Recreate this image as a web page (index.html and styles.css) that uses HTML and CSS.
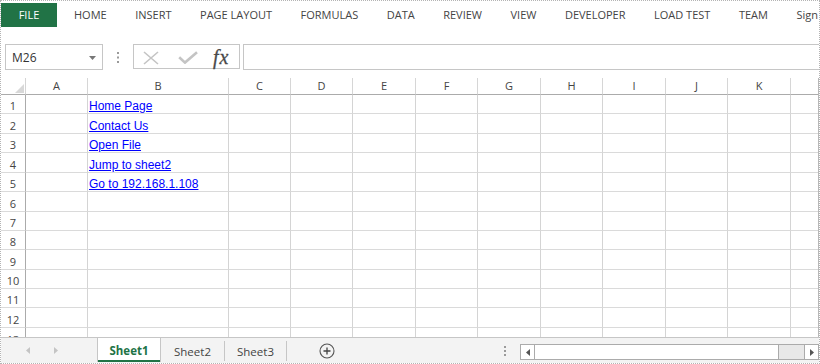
FILE: index.html
```html
<!DOCTYPE html>
<html>
<head>
<meta charset="utf-8">
<link rel="stylesheet" href="styles.css">
</head>
<body>
<div class="app">
  <div class="ribbon">
    <span class="rtab file">FILE</span>
    <span class="rtab">HOME</span>
    <span class="rtab">INSERT</span>
    <span class="rtab">PAGE LAYOUT</span>
    <span class="rtab">FORMULAS</span>
    <span class="rtab">DATA</span>
    <span class="rtab">REVIEW</span>
    <span class="rtab">VIEW</span>
    <span class="rtab">DEVELOPER</span>
    <span class="rtab">LOAD TEST</span>
    <span class="rtab">TEAM</span>
    <span class="rtab">Sign in</span>
  </div>

  <div class="fbar">
    <div class="namebox">
      <span class="nb-text">M26</span>
      <svg class="nb-arrow" width="7" height="4" viewBox="0 0 7 4"><path d="M0 0H7L3.5 4Z" fill="#777"/></svg>
    </div>
    <div class="grip">
      <svg width="2" height="11" viewBox="0 0 2 11"><rect x="0" y="0" width="2" height="2" fill="#9a9a9a"/><rect x="0" y="4.5" width="2" height="2" fill="#9a9a9a"/><rect x="0" y="9" width="2" height="2" fill="#9a9a9a"/></svg>
    </div>
    <div class="fbtns">
      <svg class="ic-x" width="16" height="14" viewBox="0 0 16 14"><path d="M1 1L15 13M15 1L1 13" stroke="#c4c4c4" stroke-width="1.6" fill="none"/></svg>
      <svg class="ic-ok" width="20" height="13" viewBox="0 0 20 13"><path d="M1.2 6.2L7 11.6L19 1.2" stroke="#c4c4c4" stroke-width="2.6" fill="none"/></svg>
      <span class="fx">fx</span>
    </div>
    <div class="finput"></div>
  </div>

  <div class="sheet">
    <div class="corner"><svg width="9" height="9" viewBox="0 0 9 9"><path d="M9 0V9H0Z" fill="#d8d8d8"/></svg></div>
    <div class="ch">A</div><div class="ch">B</div><div class="ch">C</div><div class="ch">D</div><div class="ch">E</div><div class="ch">F</div><div class="ch">G</div><div class="ch">H</div><div class="ch">I</div><div class="ch">J</div><div class="ch">K</div><div class="ch">L</div>

    <div class="rh">1</div><div class="c"></div><div class="c link"><a href="#">Home Page</a></div><div class="c"></div><div class="c"></div><div class="c"></div><div class="c"></div><div class="c"></div><div class="c"></div><div class="c"></div><div class="c"></div><div class="c"></div><div class="c"></div>
    <div class="rh">2</div><div class="c"></div><div class="c link"><a href="#">Contact Us</a></div><div class="c"></div><div class="c"></div><div class="c"></div><div class="c"></div><div class="c"></div><div class="c"></div><div class="c"></div><div class="c"></div><div class="c"></div><div class="c"></div>
    <div class="rh">3</div><div class="c"></div><div class="c link"><a href="#">Open File</a></div><div class="c"></div><div class="c"></div><div class="c"></div><div class="c"></div><div class="c"></div><div class="c"></div><div class="c"></div><div class="c"></div><div class="c"></div><div class="c"></div>
    <div class="rh">4</div><div class="c"></div><div class="c link"><a href="#">Jump to sheet2</a></div><div class="c"></div><div class="c"></div><div class="c"></div><div class="c"></div><div class="c"></div><div class="c"></div><div class="c"></div><div class="c"></div><div class="c"></div><div class="c"></div>
    <div class="rh">5</div><div class="c"></div><div class="c link"><a href="#">Go to 192.168.1.108</a></div><div class="c"></div><div class="c"></div><div class="c"></div><div class="c"></div><div class="c"></div><div class="c"></div><div class="c"></div><div class="c"></div><div class="c"></div><div class="c"></div>
    <div class="rh">6</div><div class="c"></div><div class="c"></div><div class="c"></div><div class="c"></div><div class="c"></div><div class="c"></div><div class="c"></div><div class="c"></div><div class="c"></div><div class="c"></div><div class="c"></div><div class="c"></div>
    <div class="rh">7</div><div class="c"></div><div class="c"></div><div class="c"></div><div class="c"></div><div class="c"></div><div class="c"></div><div class="c"></div><div class="c"></div><div class="c"></div><div class="c"></div><div class="c"></div><div class="c"></div>
    <div class="rh">8</div><div class="c"></div><div class="c"></div><div class="c"></div><div class="c"></div><div class="c"></div><div class="c"></div><div class="c"></div><div class="c"></div><div class="c"></div><div class="c"></div><div class="c"></div><div class="c"></div>
    <div class="rh">9</div><div class="c"></div><div class="c"></div><div class="c"></div><div class="c"></div><div class="c"></div><div class="c"></div><div class="c"></div><div class="c"></div><div class="c"></div><div class="c"></div><div class="c"></div><div class="c"></div>
    <div class="rh">10</div><div class="c"></div><div class="c"></div><div class="c"></div><div class="c"></div><div class="c"></div><div class="c"></div><div class="c"></div><div class="c"></div><div class="c"></div><div class="c"></div><div class="c"></div><div class="c"></div>
    <div class="rh">11</div><div class="c"></div><div class="c"></div><div class="c"></div><div class="c"></div><div class="c"></div><div class="c"></div><div class="c"></div><div class="c"></div><div class="c"></div><div class="c"></div><div class="c"></div><div class="c"></div>
    <div class="rh">12</div><div class="c"></div><div class="c"></div><div class="c"></div><div class="c"></div><div class="c"></div><div class="c"></div><div class="c"></div><div class="c"></div><div class="c"></div><div class="c"></div><div class="c"></div><div class="c"></div>
    <div class="rh">13</div><div class="c"></div><div class="c"></div><div class="c"></div><div class="c"></div><div class="c"></div><div class="c"></div><div class="c"></div><div class="c"></div><div class="c"></div><div class="c"></div><div class="c"></div><div class="c"></div>
  </div>

  <div class="tabbar">
    <div class="nav">
      <svg class="nav-l" width="4" height="7" viewBox="0 0 4 7"><path d="M4 0V7L0 3.5Z" fill="#c4c4c4"/></svg>
      <svg class="nav-r" width="4" height="7" viewBox="0 0 4 7"><path d="M0 0V7L4 3.5Z" fill="#c4c4c4"/></svg>
    </div>
    <div class="stab active">Sheet1</div>
    <div class="stab">Sheet2</div>
    <div class="stab">Sheet3</div>
    <div class="addsheet">
      <svg width="16" height="16" viewBox="0 0 16 16"><circle cx="8" cy="8" r="7" fill="none" stroke="#555" stroke-width="1.1"/><path d="M8 4.5V11.5M4.5 8H11.5" stroke="#444" stroke-width="1.3"/></svg>
    </div>
    <div class="spacer"></div>
    <div class="tgrip">
      <svg width="2" height="10" viewBox="0 0 2 10"><rect x="0" y="0" width="2" height="2" fill="#9a9a9a"/><rect x="0" y="4" width="2" height="2" fill="#9a9a9a"/><rect x="0" y="8" width="2" height="2" fill="#9a9a9a"/></svg>
    </div>
    <div class="hscroll">
      <div class="sbtn left"><svg width="4" height="7" viewBox="0 0 4 7"><path d="M4 0V7L0 3.5Z" fill="#555"/></svg></div>
      <div class="thumb"></div>
      <div class="track"></div>
      <div class="sbtn right"><svg width="4" height="7" viewBox="0 0 4 7"><path d="M0 0V7L4 3.5Z" fill="#555"/></svg></div>
    </div>
  </div>
</div>
</body>
</html>
```

FILE: styles.css
```css
* { box-sizing: border-box; }

body {
  margin: 0;
  background: #fff;
}

.app {
  width: 820px;
  height: 364px;
  border: 1px dotted #b4b4b4;
  display: flex;
  flex-direction: column;
  overflow: hidden;
  background: #fff;
  font-family: "Open Sans", "Noto Sans", sans-serif;
}

/* Ribbon tabs */
.ribbon {
  height: 27px;
  padding-top: 2px;
  display: flex;
  align-items: flex-start;
  flex: none;
  white-space: nowrap;
}
.rtab {
  height: 24px;
  line-height: 24px;
  padding: 0 14.25px;
  font-size: 11px;
  color: #444;
  flex: none;
}
.rtab.file {
  width: 56px;
  padding: 0;
  margin-right: 2.75px;
  text-align: center;
  background: #217346;
  color: #fff;
}

/* Formula bar */
.fbar {
  margin-top: 16px;
  height: 26px;
  display: flex;
  align-items: flex-start;
  flex: none;
}
.namebox {
  margin-left: 4px;
  width: 98px;
  height: 26px;
  border: 1px solid #c6c6c6;
  display: flex;
  align-items: center;
  justify-content: space-between;
  padding: 0 6px 0 6px;
}
.nb-text {
  font-size: 12px;
  color: #333;
}
.nb-arrow { display: block; margin-top: 1px; }
.grip {
  width: 30px;
  height: 26px;
  display: flex;
  align-items: center;
  justify-content: center;
}
.grip svg { display: block; }
.fbtns {
  width: 107px;
  height: 25px;
  border: 1px solid #c6c6c6;
  display: flex;
  align-items: center;
}
.ic-x { display: block; margin-left: 9px; margin-top: 2px; }
.ic-ok { display: block; margin-left: 19px; margin-top: 2px; }
.fx {
  margin-left: 15px;
  font-family: "Liberation Serif", "DejaVu Serif", serif;
  font-style: italic;
  font-size: 20px;
  letter-spacing: 1px;
  color: #4a4a4a;
  line-height: 20px;
  -webkit-text-stroke: 0.3px #4a4a4a;
}
.finput {
  flex: 1;
  margin-left: 3px;
  height: 26px;
  border: 1px solid #c6c6c6;
  border-right: none;
}

/* Sheet grid */
.sheet {
  margin-top: 8px;
  height: 259px;
  flex: none;
  border-right: 1px solid #b8b8b8;
  overflow: hidden;
  display: grid;
  grid-template-columns: 25px 62px 141px 62px 62px 63px 62px 63px 62px 63px 62px 63px 63px;
  grid-template-rows: 17px 19px 20px 19px 20px 19px 20px 19px 19px 20px 19px 19px 20px 20px;
}
.corner {
  border-right: 1px solid #d4d4d4;
  border-bottom: 1px solid #ababab;
  display: flex;
  align-items: flex-end;
  justify-content: flex-end;
  padding: 0 1px 1px 0;
}
.corner svg { display: block; }
.ch {
  border-right: 1px solid #d6d6d6;
  border-bottom: 1px solid #ababab;
  font-size: 11px;
  color: #444;
  text-align: center;
  line-height: 16px;
}
.rh {
  border-right: 1px solid #ababab;
  border-bottom: 1px solid #dadada;
  font-size: 11px;
  color: #444;
  text-align: center;
  display: flex;
  align-items: flex-end;
  justify-content: center;
  line-height: 15px;
}
.c {
  border-right: 1px solid #d4d4d4;
  border-bottom: 1px solid #dadada;
}
.c.link {
  display: flex;
  align-items: flex-end;
  padding-left: 1px;
  white-space: nowrap;
}
.c.link a {
  font-family: "Liberation Sans", Arial, sans-serif;
  font-size: 12px;
  line-height: 14px;
  color: #0000ff;
  text-decoration: underline;
}

/* Sheet tabs bar */
.tabbar {
  height: 26px;
  flex: none;
  border-top: 1px solid #c6c6c6;
  background: #f3f3f3;
  display: flex;
  align-items: stretch;
}
.nav {
  width: 96px;
  display: flex;
  align-items: center;
}
.nav svg { display: block; }
.nav-l { margin-left: 25px; }
.nav-r { margin-left: 24px; }
.stab {
  width: 64px;
  font-size: 11.5px;
  color: #444;
  display: flex;
  align-items: center;
  justify-content: center;
  border-right: 1px solid #c6c6c6;
  margin: 3px 0 2px;
}
.stab.active {
  margin: 0 0 1px;
  background: #fff;
  color: #217346;
  font-weight: 700;
  border-left: 1px solid #c6c6c6;
  border-right: 1px solid #c6c6c6;
  box-shadow: inset 0 -2px 0 #217346;
}
.stab:nth-child(4) { width: 62px; }
.addsheet {
  margin-left: 32px;
  display: flex;
  align-items: center;
}
.addsheet svg { display: block; }
.spacer { flex: 1; }
.tgrip {
  display: flex;
  align-items: center;
  margin-right: 14px;
}
.tgrip svg { display: block; }
.hscroll {
  width: 299px;
  height: 16px;
  margin-top: 6px;
  border: 1px solid #ababab;
  background: #e8e8e8;
  display: flex;
}
.sbtn {
  width: 14px;
  background: #fff;
  display: flex;
  align-items: center;
  justify-content: center;
}
.sbtn.left { border-right: 1px solid #ababab; }
.sbtn.right { border-left: 1px solid #ababab; }
.sbtn svg { display: block; }
.thumb {
  width: 244px;
  background: #fff;
  border-right: 1px solid #ababab;
}
.track { flex: 1; }
```
